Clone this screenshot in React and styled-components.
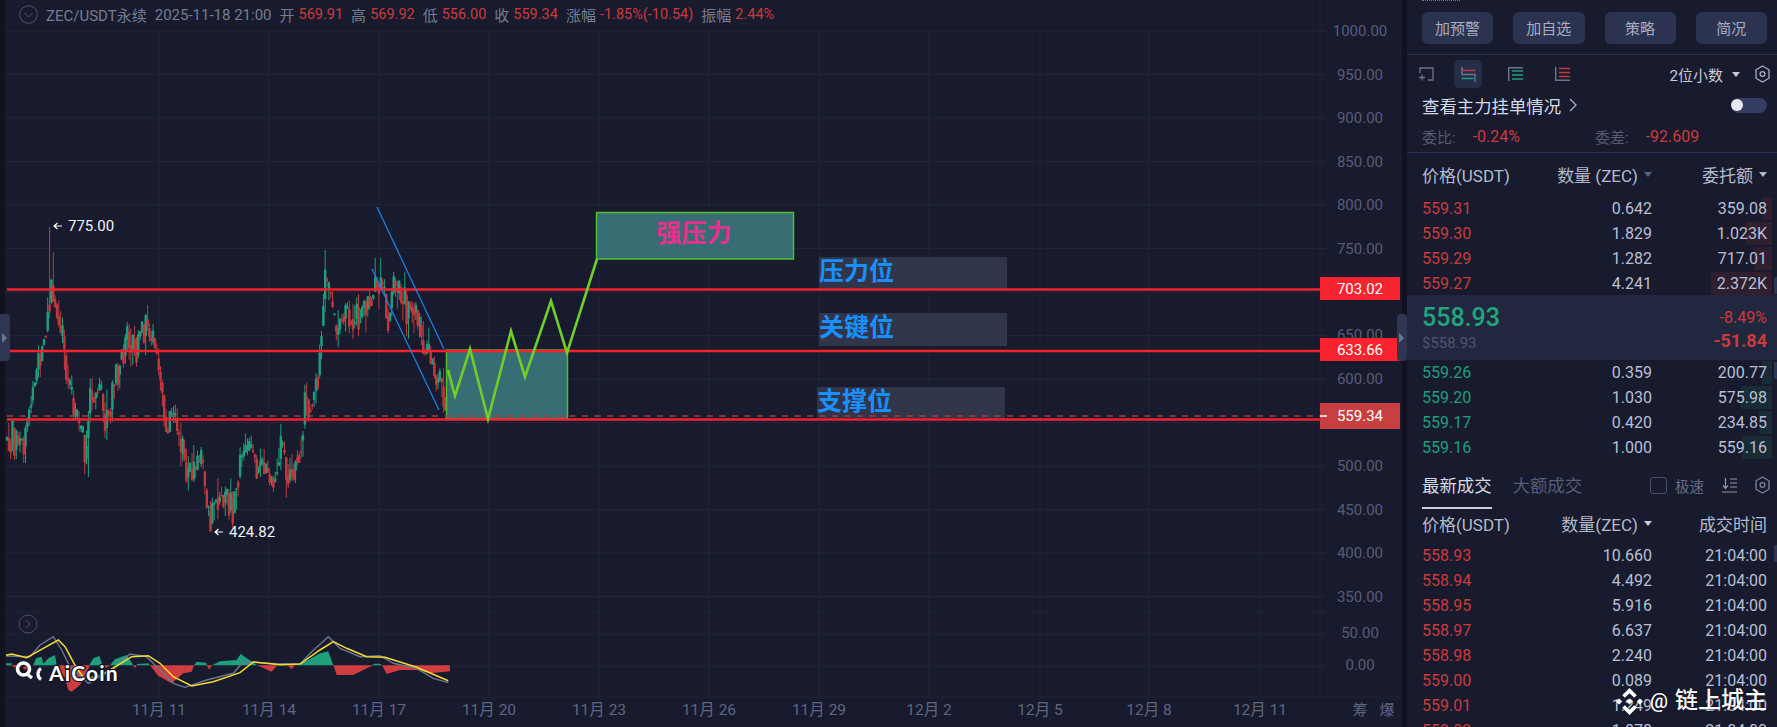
import styled, { createGlobalStyle } from "styled-components";

const GlobalStyle = createGlobalStyle`
  html, body {
    margin: 0;
    padding: 0;
    width: 1777px;
    height: 727px;
    overflow: hidden;
    background: #10131f;
  }
  * { box-sizing: border-box; }
`;

const UI_FONT = `Roboto, "Noto Sans CJK SC", sans-serif`;
const RED = "#cc3a3d";
const GREEN = "#1f9f7c";
const GRID = "#1f2437";
const LINE_RED = "#f7212e";
const BOX_GREEN = "#4fbd2e";
const BOX_FILL = "#376e73";

const Root = styled.div`
  display: flex;
  gap: 5px;
  width: 1777px;
  height: 727px;
  padding-left: 5px;
  background: #10131f;
  font-family: ${UI_FONT};
  overflow: hidden;
`;

/* ---------- chart ---------- */
const Chart = styled.div`
  position: relative;
  width: 1397px;
  height: 727px;
  flex: none;
  background: #171b2d;
`;

const ChartSvg = styled.svg`
  display: block;
  font-family: ${UI_FONT};
`;

const Legend = styled.div`
  position: absolute;
  top: 0;
  left: 14px;
  height: 29px;
  display: flex;
  align-items: center;
  gap: 8px;
  font-size: 15px;
  color: #767c94;
  white-space: nowrap;
`;

const Field = styled.span`
  display: inline-flex;
  align-items: center;
  gap: 4px;
`;

const Value = styled.span`
  font-size: 14.5px;
  color: ${RED};
`;

const Handle = styled.div`
  position: absolute;
  top: 314px;
  ${(p) => (p.$side === "left" ? "left: -5px;" : "right: -5px;")}
  width: 10px;
  height: 47px;
  background: #2f3654;
  border-radius: ${(p) => (p.$side === "left" ? "0 4px 4px 0" : "4px")};
  display: flex;
  align-items: center;
  padding-left: 2px;
  &::after {
    content: "";
    border-left: 5px solid #6d7390;
    border-top: 5px solid transparent;
    border-bottom: 5px solid transparent;
  }
`;

/* ---------- side panel ---------- */
const Side = styled.aside`
  position: relative;
  width: 370px;
  height: 727px;
  flex: none;
  background: #171b2d;
  overflow: hidden;
  font-size: 15px;
  color: #b4bace;
`;

const TopMark = styled.div`
  width: 38px;
  height: 12px;
  margin-left: 15px;
  border-top: 1px dotted #6d7390;
`;

const ButtonRow = styled.div`
  display: flex;
  gap: 20px;
  padding: 0 10px 10px 15px;
  height: 43px;
  border-bottom: 1px solid #2c3454;
`;

const ActionButton = styled.button`
  flex: 1;
  height: 32px;
  padding: 0 0 2px;
  border: 0;
  border-radius: 6px;
  background: #2b3350;
  color: #a6adc4;
  font: inherit;
`;

const ToolRow = styled.div`
  display: flex;
  align-items: center;
  gap: 19px;
  height: 28px;
  margin-top: 5px;
  padding: 0 6px 0 10px;
`;

const ToolButton = styled.div`
  width: ${(p) => (p.$narrow ? "18px" : "28px")};
  height: 28px;
  display: flex;
  align-items: center;
  justify-content: center;
  border-radius: 5px;
  background: ${(p) => (p.$active ? "#262d47" : "transparent")};
`;

const Precision = styled.div`
  margin-left: auto;
  display: flex;
  align-items: center;
  gap: 8.5px;
  color: #c6cbdd;
`;

const Caret = styled.i`
  display: inline-block;
  flex: none;
  width: 0;
  height: 0;
  border-left: 4.5px solid transparent;
  border-right: 4.5px solid transparent;
  border-top: 5px solid ${(p) => p.$color || "#c6cbdd"};
`;

const ForceRow = styled.div`
  display: flex;
  align-items: center;
  gap: 8px;
  height: 24px;
  margin-top: 5px;
  padding: 0 10px 0 15px;
  font-size: 17.4px;
  color: #d5d9e7;
`;

const Toggle = styled.div`
  margin-left: auto;
  width: 36px;
  height: 15px;
  border-radius: 8px;
  background: #353d63;
  display: flex;
  align-items: center;
  &::before {
    content: "";
    width: 12px;
    height: 12px;
    border-radius: 50%;
    background: #e6e8f0;
  }
`;

const RatioRow = styled.div`
  display: grid;
  grid-template-columns: 173px 1fr;
  align-items: center;
  height: 27px;
  margin-top: 9px;
  padding: 0 10px 5px 15px;
  border-bottom: 1px solid #2c3454;
`;

const Ratio = styled.div`
  display: flex;
  align-items: center;
  gap: 17px;
  color: #555b73;
`;

const RatioValue = styled.span`
  font-size: 16px;
  color: ${RED};
`;

const Columns = styled.div`
  position: relative;
  display: grid;
  grid-template-columns: 110px 120px 115px;
  align-items: center;
  height: ${(p) => p.$h || 25}px;
  padding: 0 10px 0 15px;
  margin-top: ${(p) => p.$mt || 0}px;
  white-space: nowrap;
`;

const HeadCell = styled.div`
  display: flex;
  align-items: center;
  justify-content: ${(p) => (p.$right ? "flex-end" : "flex-start")};
  gap: 6px;
  font-size: 17px;
  color: #b4bace;
`;

const Cell = styled.div`
  position: relative;
  font-size: 16px;
  text-align: ${(p) => (p.$right ? "right" : "left")};
  color: ${(p) => p.$color || "#b9bfd4"};
`;

const Depth = styled.div`
  position: absolute;
  top: 1px;
  right: 5px;
  bottom: 1px;
  width: ${(p) => p.$w}px;
  background: ${(p) => (p.$ask ? "rgba(205, 58, 61, 0.13)" : "rgba(31, 159, 124, 0.13)")};
`;

const ScrollMark = styled.div`
  position: absolute;
  top: ${(p) => p.$top}px;
  right: 0;
  width: 3px;
  height: 17px;
  background: #2d3555;
`;

const Spacer = styled.div`
  height: ${(p) => p.$h}px;
`;

const Ticker = styled.div`
  display: flex;
  justify-content: space-between;
  height: 65px;
  margin-top: -1px;
  padding: 8px 10px 0 15px;
  background: #21273f;
`;

const LastPrice = styled.div`
  font-size: 25px;
  line-height: 30px;
  font-weight: 500;
  color: #22a57c;
`;

const UsdPrice = styled.div`
  font-size: 15px;
  line-height: 20px;
  color: #4f5570;
`;

const Change = styled.div`
  text-align: right;
  color: ${RED};
`;

const ChangePct = styled.div`
  font-size: 16px;
  line-height: 30px;
`;

const ChangeAbs = styled.div`
  font-size: 18px;
  line-height: 16px;
  font-weight: 700;
`;

const TabRow = styled.div`
  display: flex;
  gap: 21px;
  margin-top: 14px;
  padding: 0 6px 0 15px;
`;

const Tab = styled.div`
  height: 35px;
  padding-bottom: 9px;
  line-height: 24px;
  font-size: 17.4px;
  color: ${(p) => (p.$active ? "#d5d9e7" : "#565d7b")};
  border-bottom: 2px solid ${(p) => (p.$active ? "#c8cee0" : "transparent")};
`;

const TabTools = styled.div`
  margin-left: auto;
  height: 22px;
  display: flex;
  align-items: center;
  gap: 8px;
  color: #666c87;
  font-size: 14.5px;
`;

const Check = styled.div`
  width: 17px;
  height: 17px;
  border: 1px solid #4a506a;
  border-radius: 3px;
`;

const IconGap = styled.div`
  display: flex;
  margin-left: ${(p) => p.$ml || 0}px;
`;

const Watermark = styled.div`
  position: absolute;
  left: 209px;
  top: 686px;
  display: flex;
  align-items: center;
  color: #fff;
  font-size: 23px;
  font-weight: 500;
  line-height: 30px;
  text-shadow: 0 0 2px rgba(0, 0, 0, 0.6);
  white-space: nowrap;
`;

const WatermarkAt = styled.span`
  font-size: 20px;
  margin: 0 7px 0 7px;
`;

/* ---------- chart data ---------- */
const rng = (seed) => () => {
  seed |= 0;
  seed = (seed + 0x6d2b79f5) | 0;
  let t = Math.imul(seed ^ (seed >>> 15), 1 | seed);
  t = (t + Math.imul(t ^ (t >>> 7), 61 | t)) ^ t;
  return ((t ^ (t >>> 14)) >>> 0) / 4294967296;
};

// 확대 이미지에서 읽은 좌표 (x*3, (y-200)*3)
const KEYS = [
  [20, 720], [40, 710], [60, 740], [78, 700], [100, 570], [125, 470], [145, 350], [150, 260], [170, 300],
  [190, 440], [205, 540], [220, 640], [260, 760], [270, 600], [300, 560], [318, 680], [340, 580], [365, 450],
  [385, 420], [410, 440], [440, 370], [465, 450], [485, 540], [505, 700], [525, 640], [550, 780], [575, 840],
  [605, 800], [630, 950], [660, 870], [700, 920], [720, 780], [740, 760], [790, 800], [820, 850], [840, 750],
  [870, 820], [900, 730], [915, 620], [950, 560], [965, 400], [975, 260], [1000, 350], [1010, 440], [1030, 340],
  [1060, 340], [1090, 330], [1120, 260], [1140, 240], [1165, 340], [1185, 260], [1225, 330], [1245, 310],
  [1270, 440], [1300, 500], [1330, 580], [1345, 640],
];

const midAt = (zx) => {
  for (let i = 1; i < KEYS.length; i++) {
    if (zx <= KEYS[i][0]) {
      const [x0, y0] = KEYS[i - 1];
      const [x1, y1] = KEYS[i];
      return y0 + ((y1 - y0) * (zx - x0)) / (x1 - x0);
    }
  }
  return KEYS[KEYS.length - 1][1];
};

// 고가/저가 꼬리 중 눈에 띄는 것들
const SPIKES = [[49.3, 227], [52.5, 252], [324.5, 250], [380, 258], [147, 305], [127, 322]];
const DIPS = [[210, 532], [88, 477], [235, 512], [273, 492], [26, 463], [14, 460]];

const nearest = (list, x) => list.find(([k]) => Math.abs(k - x) <= 0.93);

const buildCandles = () => {
  const r = rng(77);
  let up = "";
  let down = "";
  let prev = 200 + midAt(20) / 3;
  for (let x = 7; x < 447; x += 1.85) {
    const mid = 200 + midAt(x * 3) / 3;
    const close = mid + (r() - 0.5) * 36;
    const open = prev * 0.6 + mid * 0.4;
    let top = Math.min(open, close) - r() * r() * 22;
    let bot = Math.max(open, close) + r() * r() * 22;
    const spike = nearest(SPIKES, x);
    const dip = nearest(DIPS, x);
    if (spike) top = spike[1];
    if (dip) bot = dip[1];
    const bodyTop = Math.min(open, close);
    const bodyH = Math.max(Math.abs(open - close), 1);
    const seg =
      `M${x.toFixed(1)} ${top.toFixed(1)}V${bot.toFixed(1)}` +
      `M${(x - 0.7).toFixed(1)} ${bodyTop.toFixed(1)}h1.4v${bodyH.toFixed(1)}h-1.4z`;
    if (close < open) up += seg;
    else down += seg;
    prev = close;
  }
  return { up, down };
};

const CANDLES = buildCandles();

const sub = (pts) => pts.map(([x, y]) => `${(x / 3).toFixed(1)},${(590 + y / 3).toFixed(1)}`).join(" ");

const HIST = [
  ["g", [[18, 226], [18, 220], [35, 220], [35, 226]]],
  ["r", [[35, 226], [40, 232], [50, 232], [52, 226]]],
  ["g", [[100, 226], [108, 205], [125, 200], [130, 222], [145, 205], [165, 195], [170, 226]]],
  ["r", [[170, 226], [195, 265], [205, 300], [215, 305], [240, 285], [270, 226]]],
  ["g", [[268, 226], [280, 205], [298, 198], [308, 226]]],
  ["r", [[308, 226], [318, 234], [330, 226]]],
  ["g", [[330, 226], [345, 208], [380, 195], [400, 226]]],
  ["r", [[400, 226], [404, 235], [410, 226]]],
  ["g", [[410, 226], [412, 222], [445, 220], [450, 226]]],
  ["r", [[450, 226], [475, 258], [515, 280], [550, 250], [575, 245], [582, 226]]],
  ["g", [[582, 226], [590, 215], [618, 218], [622, 226]]],
  ["r", [[620, 226], [628, 240], [636, 226]]],
  ["g", [[636, 226], [660, 214], [710, 210], [722, 192], [745, 208], [772, 226]]],
  ["r", [[772, 226], [815, 245], [832, 226]]],
  ["g", [[835, 226], [840, 220], [860, 220], [862, 226]]],
  ["r", [[862, 226], [875, 237], [886, 226]]],
  ["g", [[886, 226], [925, 210], [960, 190], [985, 184], [1000, 226]]],
  ["r", [[1000, 226], [1010, 255], [1060, 255], [1090, 240], [1120, 226]]],
  ["g", [[1116, 226], [1122, 221], [1140, 221], [1146, 226]]],
  ["r", [[1146, 226], [1160, 252], [1200, 240], [1250, 240], [1290, 250], [1350, 244], [1350, 226]]],
];

const YELLOW = [
  [18, 196], [35, 192], [80, 203], [130, 175], [175, 150], [195, 170], [230, 235], [250, 262], [290, 262], [330, 240],
  [395, 200], [445, 197], [480, 220], [520, 260], [575, 288], [640, 275], [720, 248], [760, 216], [840, 224],
  [900, 222], [960, 180], [1000, 155], [1040, 175], [1100, 200], [1155, 202], [1250, 232], [1345, 272],
];
const GREY = [
  [18, 198], [90, 200], [120, 165], [160, 140], [185, 180], [210, 230], [265, 280], [330, 245], [390, 192],
  [440, 200], [480, 240], [520, 280], [555, 292], [620, 270], [700, 250], [730, 215], [840, 222], [900, 222],
  [935, 185], [985, 140], [1020, 175], [1080, 200], [1140, 197], [1180, 220], [1250, 235], [1300, 265], [1345, 278],
];

const PRICE_LINES = [31, 74.5, 118, 161.5, 205, 248.5, 292, 335.5, 379, 422.5, 466, 509.5, 553, 596.5, 612.7, 634, 666, 697];
const TIME_LINES = [159, 269, 379, 489, 599, 709, 819, 929, 1040, 1149, 1260];
const PRICE_LABELS = [
  ["1000.00", 31], ["950.00", 74.5], ["900.00", 118], ["850.00", 161.5], ["800.00", 205], ["750.00", 248.5],
  ["650.00", 335], ["600.00", 379], ["500.00", 466], ["450.00", 509.5], ["400.00", 553], ["350.00", 596.5],
  ["50.00", 633], ["0.00", 665],
];
const TIME_LABELS = ["11月 11", "11月 14", "11月 17", "11月 20", "11月 23", "11月 26", "11月 29", "12月 2", "12月 5", "12月 8", "12月 11"];
const TAGS = [
  { y: 277, h: 23, fill: "#f7232f", label: "703.02" },
  { y: 338, h: 23, fill: "#f7232f", label: "633.66" },
  { y: 403, h: 26, fill: "#c83f42", label: "559.34" },
];
const NOTES = [
  { x: 819, y: 257, h: 32, label: "压力位" },
  { x: 819, y: 313, h: 33, label: "关键位" },
  { x: 817, y: 387, h: 31, label: "支撑位" },
];
const ROUTE = "448,370 455,396 470,349 488,419 511,331 525,377 551,301 567,353 597,259";

const ExtremeLabel = ({ x, y, text }) => (
  <g>
    <path d={`M${x + 8} ${y}H${x}M${x + 3.5} ${y - 3}L${x} ${y}L${x + 3.5} ${y + 3}`} stroke="#fff" fill="none" strokeWidth="1.1" />
    <text x={x + 14} y={y} fill="#f2f3f7" fontSize="15" dominantBaseline="central">{text}</text>
  </g>
);

const ChartDrawing = () => (
  <ChartSvg width="1397" height="727" viewBox="5 0 1397 727">
    {PRICE_LINES.map((y) => (
      <line key={y} x1="5" x2={y === 697 ? 1402 : 1327} y1={y} y2={y} stroke={GRID} />
    ))}
    {TIME_LINES.map((x) => (
      <line key={x} x1={x} x2={x} y1="31" y2="697" stroke={GRID} />
    ))}
    <line x1="1320" x2="1320" y1="0" y2="697" stroke={GRID} />

    <path d={CANDLES.up} fill={GREEN} stroke={GREEN} strokeWidth="1" />
    <path d={CANDLES.down} fill="#c23a3d" stroke="#c23a3d" strokeWidth="1" />

    {HIST.map(([c, pts], i) => (
      <polygon key={i} points={sub(pts)} fill={c === "g" ? GREEN : "#cf3d40"} />
    ))}
    <polyline points={sub(GREY)} fill="none" stroke="#6d7592" strokeWidth="1.4" />
    <polyline points={sub(YELLOW)} fill="none" stroke="#f3dc2d" strokeWidth="1.5" />

    <circle cx="28" cy="624" r="9" fill="none" stroke="#4a5068" />
    <path d="M26 620l4 4l-4 4" fill="none" stroke="#4a5068" />

    {/* AiCoin 워터마크 */}
    <circle cx="23.5" cy="669" r="6" fill="#11131f" stroke="#fff" strokeWidth="3.6" />
    <circle cx="25" cy="668" r="1.8" fill="#d8343a" />
    <path d="M27 674l5 4" stroke="#fff" strokeWidth="3.2" />
    <path d="M41 668.5a6.5 6.5 0 0 0 0 11" fill="none" stroke="#fff" strokeWidth="3.2" />
    <text
      x="49"
      y="681"
      fill="#fff"
      fontSize="21"
      fontWeight="700"
      letterSpacing="1.2"
      stroke="#11131f"
      strokeWidth="2.5"
      paintOrder="stroke"
      fontFamily="Lato, Roboto, sans-serif"
    >
      AiCoin
    </text>

    {/* 구간 박스 */}
    {NOTES.map((n) => (
      <rect key={n.label} x={n.x} y={n.y} width="188" height={n.h} fill="#30354a" />
    ))}
    <rect x="446.5" y="350" width="121" height="69" fill={BOX_FILL} stroke={BOX_GREEN} strokeWidth="1.5" />
    <rect x="596.5" y="212.5" width="197" height="46.5" fill={BOX_FILL} stroke={BOX_GREEN} strokeWidth="1.5" />

    <line x1="7" x2="1320" y1="416" y2="416" stroke="#a83a40" strokeWidth="1.6" strokeDasharray="6 6.5" />
    <line x1="7" x2="1320" y1="289.5" y2="289.5" stroke={LINE_RED} strokeWidth="2.4" />
    <line x1="10" x2="1320" y1="351" y2="351" stroke={LINE_RED} strokeWidth="2.4" />
    <line x1="7" x2="1320" y1="419.5" y2="419.5" stroke={LINE_RED} strokeWidth="2.4" />

    <line x1="377" y1="207" x2="444" y2="349" stroke="#1c7fe0" strokeWidth="1.3" />
    <line x1="372" y1="269" x2="439" y2="410" stroke="#1c7fe0" strokeWidth="1.3" />
    <polyline points={ROUTE} fill="none" stroke="#6fce2a" strokeWidth="2.6" />

    <text x="694" y="233" textAnchor="middle" dominantBaseline="central" fill="#e6318f" fontSize="25" fontWeight="700">强压力</text>
    {NOTES.map((n) => (
      <text key={n.label} x={n.x} y={n.y + 14} dominantBaseline="central" fill="#1890ff" fontSize="25" fontWeight="700">{n.label}</text>
    ))}

    <ExtremeLabel x={54} y={226} text="775.00" />
    <ExtremeLabel x={215} y={532} text="424.82" />

    {PRICE_LABELS.map(([t, y]) => (
      <text key={t} x="1360" y={y} textAnchor="middle" dominantBaseline="central" fill="#565d7a" fontSize="15">{t}</text>
    ))}
    {TAGS.map((t) => (
      <g key={t.label}>
        <rect x="1320" y={t.y} width="80" height={t.h} fill={t.fill} />
        <text x="1360" y={t.y + t.h / 2} textAnchor="middle" dominantBaseline="central" fill="#fff" fontSize="15">{t.label}</text>
      </g>
    ))}
    <line x1="1320" x2="1327" y1="416" y2="416" stroke="#fff" strokeWidth="1.5" />

    {TIME_LABELS.map((t, i) => (
      <text key={t} x={TIME_LINES[i]} y="710" textAnchor="middle" dominantBaseline="central" fill="#5e6684" fontSize="15.5">{t}</text>
    ))}
    <text x="1360" y="710" textAnchor="middle" dominantBaseline="central" fill="#5e6684" fontSize="15">筹</text>
    <text x="1387" y="710" textAnchor="middle" dominantBaseline="central" fill="#5e6684" fontSize="15">爆</text>
  </ChartSvg>
);

/* ---------- icons ---------- */
const LegendToggle = () => (
  <svg width="19" height="19" viewBox="0 0 19 19" fill="none" stroke="#4f5570">
    <circle cx="9.5" cy="9.5" r="8.8" />
    <path d="M5.5 8l4 4l4-4" />
  </svg>
);

const Hexagon = ({ color = "#a6adc4", size = 17 }) => (
  <svg width={size} height={size + 1} viewBox="0 0 16 18" fill="none" stroke={color} strokeWidth="1.3">
    <path d="M8 1l6.5 3.8v8.4L8 17l-6.5-3.8V4.8z" />
    <circle cx="8" cy="9" r="2.4" />
  </svg>
);

const GREY_ICON = "#6d7390";

const AddBoxIcon = () => (
  <svg width="15" height="14" viewBox="0 0 15 14" fill="none" stroke={GREY_ICON} strokeWidth="1.3">
    <path d="M1 6V1h13v12H9" />
    <path d="M0 10.5h6M3 7.5v6" />
  </svg>
);

const BothIcon = () => (
  <svg width="15" height="15" viewBox="0 0 15 15" fill="none" strokeWidth="1.5">
    <path d="M1 0v7.5h13V15" stroke={GREY_ICON} />
    <path d="M2 3.5h12.5" stroke="#c23a3d" />
    <path d="M.5 11.5h12" stroke={GREEN} />
  </svg>
);

const BidsIcon = () => (
  <svg width="15" height="14" viewBox="0 0 15 14" fill="none" strokeWidth="1.4">
    <path d="M.7 14V.7H15" stroke={GREY_ICON} />
    <path d="M4 4h11M4 8h11M4 12h11" stroke={GREEN} />
  </svg>
);

const AsksIcon = () => (
  <svg width="15" height="14" viewBox="0 0 15 14" fill="none" strokeWidth="1.4">
    <path d="M.7 0v13.3H15" stroke={GREY_ICON} />
    <path d="M4 1.5h11M4 5.5h11M4 9.5h11" stroke="#c23a3d" />
  </svg>
);

const SortIcon = () => (
  <svg width="16" height="15" viewBox="0 0 16 15" fill="none" stroke="#8f96ad" strokeWidth="1.2">
    <path d="M3.5 0v10M1 7.5l2.5 3l2.5-3" />
    <path d="M8 1h7M8 5h7M8 9h7M0 14h15" />
  </svg>
);

const Chevron = () => (
  <svg width="8" height="14" viewBox="0 0 8 14" fill="none" stroke="#a6adc4" strokeWidth="1.3">
    <path d="M1 1l6 6l-6 6" />
  </svg>
);

const DiamondLogo = () => (
  <svg width="27" height="27" viewBox="0 0 26 26" fill="#fff">
    <polygon points="13,0 20,7 17.5,9.5 13,5 8.5,9.5 6,7" />
    <polygon points="13,26 20,19 17.5,16.5 13,21 8.5,16.5 6,19" />
    <polygon points="3,10 6,13 3,16 0,13" />
    <polygon points="23,10 26,13 23,16 20,13" />
    <polygon points="13,10 16,13 13,16 10,13" />
  </svg>
);

/* ---------- side data ---------- */
const ASKS = [
  ["559.31", "0.642", "359.08", 9],
  ["559.30", "1.829", "1.023K", 26],
  ["559.29", "1.282", "717.01", 18],
  ["559.27", "4.241", "2.372K", 61],
];
const BIDS = [
  ["559.26", "0.359", "200.77", 10],
  ["559.20", "1.030", "575.98", 31],
  ["559.17", "0.420", "234.85", 13],
  ["559.16", "1.000", "559.16", 30],
];
const TRADES = [
  ["558.93", "10.660"],
  ["558.94", "4.492"],
  ["558.95", "5.916"],
  ["558.97", "6.637"],
  ["558.98", "2.240"],
  ["559.00", "0.089"],
  ["559.01", "1.249"],
  ["559.02", "1.878"],
];

const BookRow = ({ row, ask }) => (
  <Columns>
    <Depth $ask={ask} $w={row[3]} />
    <Cell $color={ask ? RED : GREEN}>{row[0]}</Cell>
    <Cell $right>{row[1]}</Cell>
    <Cell $right>{row[2]}</Cell>
  </Columns>
);

const App = () => (
  <Root>
    <GlobalStyle />
    <Chart>
      <ChartDrawing />
      <Legend>
        <LegendToggle />
        <span>ZEC/USDT永续</span>
        <span>2025-11-18 21:00</span>
        <Field>开<Value>569.91</Value></Field>
        <Field>高<Value>569.92</Value></Field>
        <Field>低<Value>556.00</Value></Field>
        <Field>收<Value>559.34</Value></Field>
        <Field>涨幅<Value>-1.85%(-10.54)</Value></Field>
        <Field>振幅<Value>2.44%</Value></Field>
      </Legend>
      <Handle $side="left" />
      <Handle $side="right" />
    </Chart>

    <Side>
      <TopMark />
      <ButtonRow>
        <ActionButton>加预警</ActionButton>
        <ActionButton>加自选</ActionButton>
        <ActionButton>策略</ActionButton>
        <ActionButton>简况</ActionButton>
      </ButtonRow>

      <ToolRow>
        <ToolButton $narrow><AddBoxIcon /></ToolButton>
        <ToolButton $active><BothIcon /></ToolButton>
        <ToolButton><BidsIcon /></ToolButton>
        <ToolButton><AsksIcon /></ToolButton>
        <Precision>
          2位小数
          <Caret />
          <IconGap $ml={6}><Hexagon color="#a6adc4" /></IconGap>
        </Precision>
      </ToolRow>

      <ForceRow>
        查看主力挂单情况
        <Chevron />
        <Toggle />
      </ForceRow>

      <RatioRow>
        <Ratio>委比:<RatioValue>-0.24%</RatioValue></Ratio>
        <Ratio>委差:<RatioValue>-92.609</RatioValue></Ratio>
      </RatioRow>

      <Columns $h={24} $mt={9}>
        <HeadCell>价格(USDT)</HeadCell>
        <HeadCell $right>数量 (ZEC)<Caret $color="#5c6380" /></HeadCell>
        <HeadCell $right>委托额<Caret $color="#b4bace" /></HeadCell>
      </Columns>

      <Spacer $h={10} />
      {ASKS.map((row) => <BookRow key={row[0]} row={row} ask />)}
      <ScrollMark $top={277} />

      <Ticker>
        <div>
          <LastPrice>558.93</LastPrice>
          <UsdPrice>$558.93</UsdPrice>
        </div>
        <Change>
          <ChangePct>-8.49%</ChangePct>
          <ChangeAbs>-51.84</ChangeAbs>
        </Change>
      </Ticker>

      {BIDS.map((row) => <BookRow key={row[0]} row={row} />)}
      <ScrollMark $top={362} />

      <TabRow>
        <Tab $active>最新成交</Tab>
        <Tab>大额成交</Tab>
        <TabTools>
          <Check />
          极速
          <IconGap $ml={10}><SortIcon /></IconGap>
          <IconGap $ml={8}><Hexagon color="#7c8299" /></IconGap>
        </TabTools>
      </TabRow>

      <Columns $h={24} $mt={2}>
        <HeadCell>价格(USDT)</HeadCell>
        <HeadCell $right>数量(ZEC)<Caret /></HeadCell>
        <HeadCell $right>成交时间</HeadCell>
      </Columns>

      <Spacer $h={8} />
      {TRADES.map((row) => (
        <Columns key={row[0]}>
          <Cell $color={RED}>{row[0]}</Cell>
          <Cell $right>{row[1]}</Cell>
          <Cell $right>21:04:00</Cell>
        </Columns>
      ))}
      <ScrollMark $top={545} />

      <Watermark>
        <DiamondLogo />
        <WatermarkAt>@</WatermarkAt>
        链上城主
      </Watermark>
    </Side>
  </Root>
);

export default App;
